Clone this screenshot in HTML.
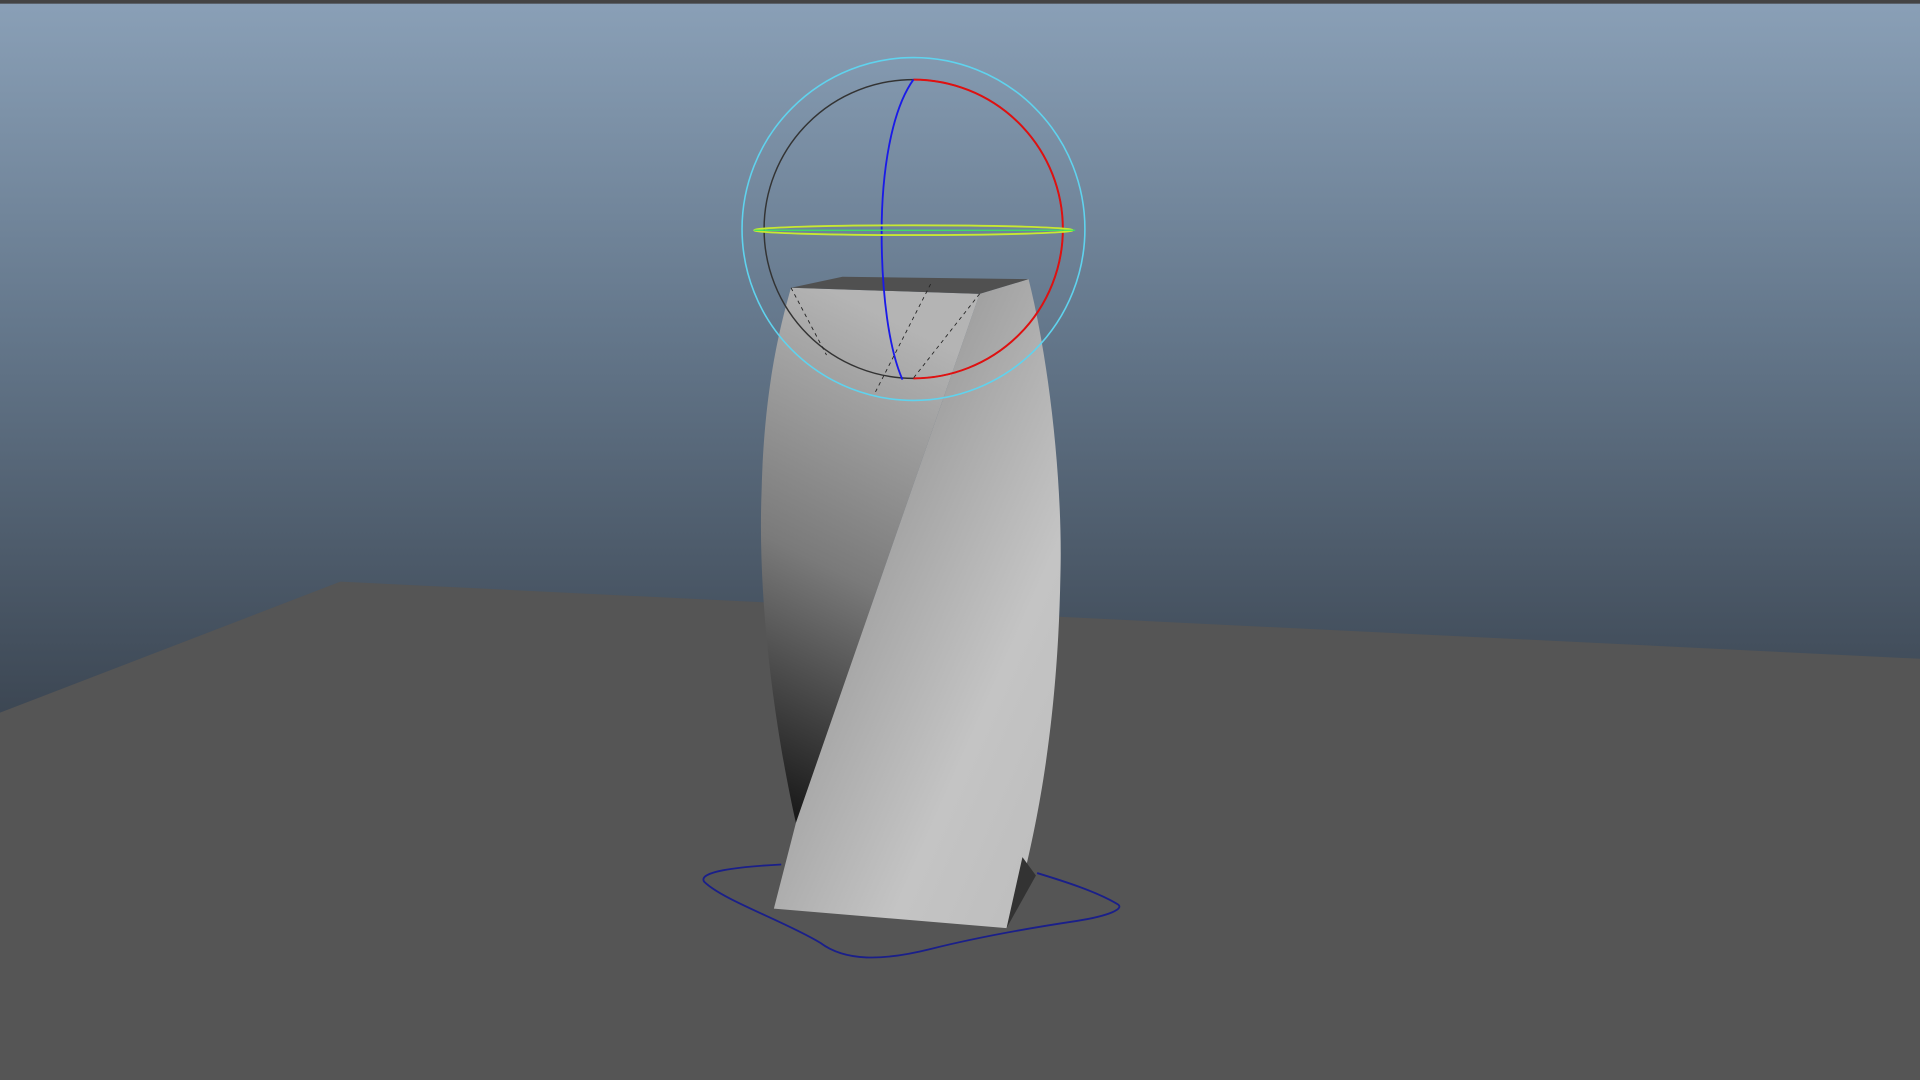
<!DOCTYPE html>
<html><head><meta charset="utf-8"><style>html,body{margin:0;padding:0;width:1920px;height:1080px;overflow:hidden;background:#555}</style></head>
<body>
<svg width="1920" height="1080" viewBox="0 0 1568 882" preserveAspectRatio="none" xmlns="http://www.w3.org/2000/svg">
<defs>
<linearGradient id="sky" x1="0" y1="0" x2="0" y2="1">
<stop offset="0" stop-color="#8aa0b7"/><stop offset="0.45" stop-color="#64778b"/><stop offset="1" stop-color="#3a4450"/>
</linearGradient>
<linearGradient id="lf" x1="0.3" y1="0" x2="0.1" y2="1">
<stop offset="0" stop-color="#b4b4b4"/><stop offset="0.5" stop-color="#7a7a7a"/><stop offset="1" stop-color="#151515"/>
</linearGradient>
<linearGradient id="rf" x1="0" y1="0" x2="1" y2="1">
<stop offset="0" stop-color="#303030"/><stop offset="0.3" stop-color="#9a9a9a"/><stop offset="0.7" stop-color="#c4c4c4"/><stop offset="1" stop-color="#bcbcbc"/>
</linearGradient>
</defs>
<rect x="0" y="0" width="1568" height="600" fill="url(#sky)"/>
<rect x="0" y="0" width="1568" height="3" fill="#444"/>
<polygon points="0,582 278,475 1568,538 1568,882 0,882" fill="#555"/>
<path d="M646,235 L800,240 L650,672 C636,610 618,500 622,400 C624,320 636,270 646,235 Z" fill="url(#lf)"/>
<path d="M800,240 L840,228 C858,300 868,400 866,470 C864,580 850,660 835,720 L822,758 L632,742 L650,672 Z" fill="url(#rf)"/>
<path d="M835,700 L846,715 L822,758 Z" fill="#333"/>
<path d="M646,235 L688,226 L840,228 L800,240 Z" fill="#505050"/>
<path d="M638,706 C600,708 570,712 575,720 C590,735 640,752 670,770 C690,785 720,785 760,775 C800,765 840,758 880,752 C905,748 920,742 912,738 C895,728 870,720 847,713" fill="none" stroke="#1a1f8a" stroke-width="1.5"/>
<circle cx="746" cy="187" r="140" fill="none" stroke="#5fd3ee" stroke-width="1.3"/>
<circle cx="746" cy="187" r="122" fill="none" stroke="#333" stroke-width="1.2"/>
<path d="M746,65 A122,122 0 0 1 746,309" fill="none" stroke="#e01010" stroke-width="1.6"/>
<path d="M746,65 C728,90 720,140 720,190 C720,240 726,285 737,310" fill="none" stroke="#1a1ae8" stroke-width="1.5"/>
<ellipse cx="746" cy="188" rx="130" ry="4" fill="none" stroke="#c8e830" stroke-width="1.5"/>
<line x1="616" y1="188" x2="878" y2="188" stroke="#38e860" stroke-width="1"/>
<path d="M646,235 L675,290 M760,232 L715,320 M800,240 L745,310" stroke="#222" stroke-width="0.7" stroke-dasharray="3,3" fill="none"/>
</svg>
</body></html>
